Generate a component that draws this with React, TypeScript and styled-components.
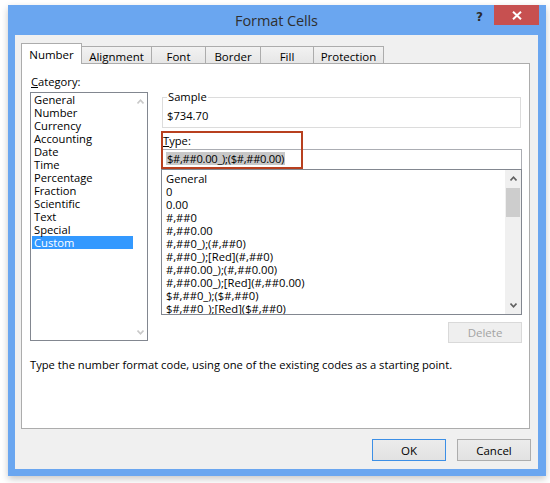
import React from "react";
import styled, { createGlobalStyle } from "styled-components";

const GlobalStyle = createGlobalStyle`
  html, body { margin: 0; padding: 0; background: #ffffff; }
  body {
    font-family: "Open Sans", "Noto Sans", sans-serif;
    font-size: 11.2px;
    letter-spacing: 0;
    color: #000;
  }
  * { box-sizing: border-box; }
`;

const Page = styled.div`
  padding: 5px 0 0 8px;
  width: 550px;
  height: 483px;
`;

const Window = styled.div`
  width: 538px;
  height: 471px;
  background: #6aa6f0;
  padding: 0 8px 7px 7px;
  display: flex;
  flex-direction: column;
  box-shadow: 0 3px 7px rgba(0, 0, 0, 0.22);
`;

const TitleBar = styled.div`
  height: 30px;
  display: grid;
  grid-template-columns: 1fr auto 1fr;
`;

const Title = styled.div`
  grid-column: 2;
  align-self: center;
  font-size: 14.5px;
  letter-spacing: -0.1px;
  color: #2f2f2f;
  padding-top: 1px;
`;

const Controls = styled.div`
  grid-column: 3;
  justify-self: end;
  display: flex;
  align-items: flex-start;
  margin-right: -1px;
`;

const HelpButton = styled.div`
  width: 26px;
  height: 22px;
  display: flex;
  align-items: center;
  justify-content: center;
  font-family: "DejaVu Sans", sans-serif;
  font-weight: bold;
  font-size: 12px;
  color: #2a2a2a;
  padding-top: 1px;
  padding-right: 3px;
`;

const CloseButton = styled.div`
  width: 45px;
  height: 20px;
  background: #c75050;
  display: flex;
  align-items: center;
  justify-content: center;
`;

const Body = styled.div`
  flex: 1;
  background: #f0f0f0;
  padding: 8px 8px 8px 6px;
  display: flex;
  flex-direction: column;
`;

const TabRow = styled.div`
  display: flex;
  align-items: flex-end;
  height: 21px;
  margin-bottom: -1px;
  position: relative;
  z-index: 1;
`;

const Tab = styled.div<{ $w: number; $active?: boolean }>`
  width: ${(p) => p.$w}px;
  height: ${(p) => (p.$active ? 21 : 18)}px;
  margin-left: -1px;
  &:first-child { margin-left: 0; }
  border: 1px solid #acacac;
  border-bottom: ${(p) => (p.$active ? "none" : "1px solid #acacac")};
  background: ${(p) =>
    p.$active ? "#ffffff" : "linear-gradient(#f2f2f2, #e6e6e6)"};
  display: flex;
  justify-content: center;
  align-items: flex-start;
  padding-top: ${(p) => (p.$active ? 3 : 2)}px;
  line-height: 16px;
  font-size: 11.5px;
  color: #000;
`;

const Panel = styled.div`
  flex: 1;
  background: #ffffff;
  border: 1px solid #acacac;
  padding: 10px 7px 0 8px;
  display: grid;
  grid-template-columns: 118px 361px;
  column-gap: 13px;
  align-content: start;
`;

const LeftColumn = styled.div`
  display: flex;
  flex-direction: column;
`;

const RightColumn = styled.div`
  display: flex;
  flex-direction: column;
`;

const Label = styled.div<{ $pad?: number }>`
  line-height: 16px;
  height: 16px;
  padding-left: ${(p) => p.$pad ?? 1}px;
  color: #000;
`;

const Key = styled.span`
  text-decoration: underline;
  text-underline-offset: 1px;
`;

const CategoryBox = styled.div`
  margin-top: 2px;
  height: 249px;
  border: 1px solid #828790;
  display: flex;
`;

const CategoryItems = styled.div`
  flex: 1;
  padding: 0 0 0 1px;
`;

const CategoryItem = styled.div<{ $selected?: boolean }>`
  height: 13px;
  line-height: 13px;
  padding-left: 2px;
  white-space: nowrap;
  background: ${(p) => (p.$selected ? "#3399ff" : "transparent")};
  color: ${(p) => (p.$selected ? "#ffffff" : "#000000")};
`;

const ScrollBar = styled.div<{ $w: number; $track: string }>`
  width: ${(p) => p.$w}px;
  background: ${(p) => p.$track};
  display: flex;
  flex-direction: column;
`;

const ScrollArrow = styled.div<{ $h: number }>`
  height: ${(p) => p.$h}px;
  display: flex;
  align-items: center;
  justify-content: center;
`;

const ScrollThumb = styled.div`
  height: 29px;
  margin: 1px 1px 0 1px;
  background: #cdcdcd;
`;

const ScrollSpacer = styled.div`
  flex: 1;
`;

const Fieldset = styled.fieldset`
  margin: 15px 1px 0 1px;
  padding: 3px 4px 3px 4px;
  border: 1px solid #dcdcdc;
  min-width: 0;
`;

const Legend = styled.legend`
  padding: 0 1px;
  margin: 0;
  line-height: 16px;
`;

const SampleValue = styled.div`
  line-height: 16px;
  height: 16px;
`;

const TypeArea = styled.div`
  margin-top: 5px;
  position: relative;
  display: flex;
  flex-direction: column;
`;

const Annotation = styled.div`
  position: absolute;
  left: 0;
  top: -2px;
  width: 142px;
  height: 38px;
  border: 2px solid #b8401f;
  pointer-events: none;
`;

const TypeInput = styled.div`
  height: 20px;
  border: 1px solid #abadb3;
  border-bottom: none;
  margin-left: 1px;
  padding: 2px 0 0 3px;
  display: flex;
  align-items: flex-start;
`;

const Selection = styled.span`
  background: #c8c8c8;
  line-height: 13px;
  height: 13px;
  padding: 0 1px;
  white-space: nowrap;
  letter-spacing: -0.3px;
`;

const FormatBox = styled.div`
  height: 146px;
  border: 1px solid #828790;
  display: flex;
  overflow: hidden;
`;

const FormatItems = styled.div`
  flex: 1;
  padding: 2px 0 0 4px;
  overflow: hidden;
`;

const FormatItem = styled.div`
  height: 13px;
  line-height: 13px;
  white-space: nowrap;
`;

const DeleteButton = styled.div`
  margin-top: 7px;
  align-self: flex-end;
  width: 74px;
  height: 21px;
  border: 1px solid #d9d9d9;
  background: #efefef;
  color: #a3a3a3;
  display: flex;
  align-items: center;
  justify-content: center;
  font-size: 11.5px;
`;

const HelpText = styled.div`
  grid-column: 1 / span 2;
  margin-top: 14px;
  line-height: 16px;
`;

const ButtonRow = styled.div`
  margin-top: 10px;
  margin-right: -1px;
  display: flex;
  justify-content: flex-end;
  gap: 11px;
`;

const DialogButton = styled.div<{ $default?: boolean }>`
  width: 74px;
  height: 22px;
  border: 1px solid ${(p) => (p.$default ? "#3c8fe6" : "#adadad")};
  background: linear-gradient(#ececec, #e2e2e2);
  display: flex;
  align-items: center;
  justify-content: center;
  font-size: 11.5px;
  color: #000;
`;

const Chevron = ({ up, color }: { up?: boolean; color: string }) => (
  <svg width="7" height="5" viewBox="0 0 7 5">
    <path
      d={up ? "M0.5 4.5 L3.5 1.2 L6.5 4.5" : "M0.5 0.5 L3.5 3.8 L6.5 0.5"}
      fill="none"
      stroke={color}
      strokeWidth="1.6"
    />
  </svg>
);

const categories = [
  "General",
  "Number",
  "Currency",
  "Accounting",
  "Date",
  "Time",
  "Percentage",
  "Fraction",
  "Scientific",
  "Text",
  "Special",
  "Custom",
];

const formats = [
  "General",
  "0",
  "0.00",
  "#,##0",
  "#,##0.00",
  "#,##0_);(#,##0)",
  "#,##0_);[Red](#,##0)",
  "#,##0.00_);(#,##0.00)",
  "#,##0.00_);[Red](#,##0.00)",
  "$#,##0_);($#,##0)",
  "$#,##0_);[Red]($#,##0)",
];

const tabs: { label: string; w: number }[] = [
  { label: "Number", w: 61 },
  { label: "Alignment", w: 71 },
  { label: "Font", w: 55 },
  { label: "Border", w: 56 },
  { label: "Fill", w: 54 },
  { label: "Protection", w: 71 },
];

export default function App() {
  return (
    <>
      <GlobalStyle />
      <Page>
        <Window>
          <TitleBar>
            <Title>Format Cells</Title>
            <Controls>
              <HelpButton>?</HelpButton>
              <CloseButton>
                <svg width="10" height="9" viewBox="0 0 10 9">
                  <path
                    d="M1 0.8 L9 8.2 M9 0.8 L1 8.2"
                    stroke="#ffffff"
                    strokeWidth="2"
                    fill="none"
                  />
                </svg>
              </CloseButton>
            </Controls>
          </TitleBar>
          <Body>
            <TabRow>
              {tabs.map((t, i) => (
                <Tab key={t.label} $w={t.w} $active={i === 0}>
                  {t.label}
                </Tab>
              ))}
            </TabRow>
            <Panel>
              <LeftColumn>
                <Label>
                  <Key>C</Key>ategory:
                </Label>
                <CategoryBox>
                  <CategoryItems>
                    {categories.map((c) => (
                      <CategoryItem key={c} $selected={c === "Custom"}>
                        {c}
                      </CategoryItem>
                    ))}
                  </CategoryItems>
                  <ScrollBar $w={14} $track="#ffffff">
                    <ScrollArrow $h={16}>
                      <Chevron up color="#c9c9c9" />
                    </ScrollArrow>
                    <ScrollSpacer />
                    <ScrollArrow $h={16}>
                      <Chevron color="#c9c9c9" />
                    </ScrollArrow>
                  </ScrollBar>
                </CategoryBox>
              </LeftColumn>
              <RightColumn>
                <Fieldset>
                  <Legend>Sample</Legend>
                  <SampleValue>$734.70</SampleValue>
                </Fieldset>
                <TypeArea>
                  <Label $pad={2}>
                    <Key>T</Key>ype:
                  </Label>
                  <TypeInput>
                    <Selection>$#,##0.00_);($#,##0.00)</Selection>
                  </TypeInput>
                  <Annotation />
                </TypeArea>
                <FormatBox>
                  <FormatItems>
                    {formats.map((f) => (
                      <FormatItem key={f}>{f}</FormatItem>
                    ))}
                  </FormatItems>
                  <ScrollBar $w={16} $track="#f0f0f0">
                    <ScrollArrow $h={17}>
                      <Chevron up color="#606060" />
                    </ScrollArrow>
                    <ScrollThumb />
                    <ScrollSpacer />
                    <ScrollArrow $h={17}>
                      <Chevron color="#606060" />
                    </ScrollArrow>
                  </ScrollBar>
                </FormatBox>
                <DeleteButton>Delete</DeleteButton>
              </RightColumn>
              <HelpText>
                Type the number format code, using one of the existing codes as a
                starting point.
              </HelpText>
            </Panel>
            <ButtonRow>
              <DialogButton $default>OK</DialogButton>
              <DialogButton>Cancel</DialogButton>
            </ButtonRow>
          </Body>
        </Window>
      </Page>
    </>
  );
}
